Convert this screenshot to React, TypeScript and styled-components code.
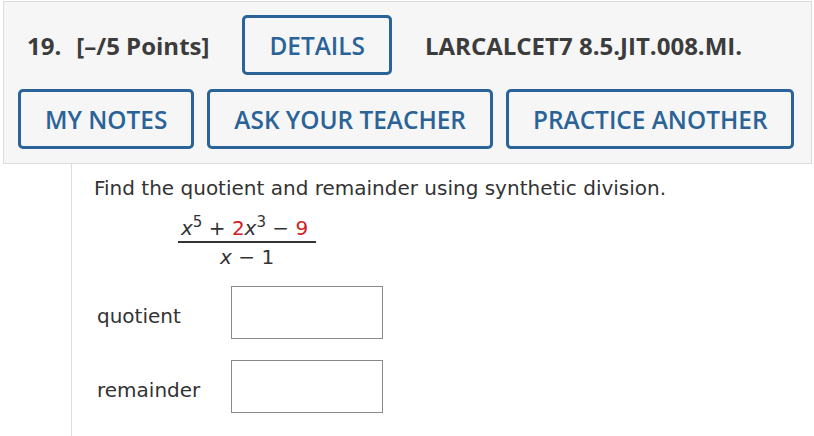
import React from 'react';
import styled, { createGlobalStyle } from 'styled-components';

const GlobalStyle = createGlobalStyle`
  html, body {
    margin: 0;
    padding: 0;
    background: #ffffff;
  }
  body {
    font-family: 'Open Sans', 'Liberation Sans', sans-serif;
    overflow: hidden;
  }
`;

const Panel = styled.div`
  margin: 1px 2px 0 3px;
  border: 1px solid #dcdcdc;
  background: #f6f6f6;
  padding: 13px 0 14px 14px;
  display: flex;
  flex-direction: column;
  gap: 14px;
`;

const Row = styled.div<{ $indent?: number; $gap?: number }>`
  display: flex;
  align-items: center;
  gap: ${(p) => p.$gap || 13}px;
  padding-left: ${(p) => p.$indent || 0}px;
`;

const Title = styled.div`
  display: flex;
  gap: 15px;
`;

const Heading = styled.span`
  font-size: 24px;
  font-weight: 700;
  color: #3c3c3c;
`;

const OutlineButton = styled.button`
  height: 60px;
  padding: 0 24px;
  border: 3px solid #2a6397;
  border-radius: 5px;
  background: #f6f6f6;
  color: #2a6397;
  font-family: 'Open Sans', 'Liberation Sans', sans-serif;
  font-size: 24.4px;
  font-weight: 600;
  cursor: pointer;
`;

const Body = styled.div`
  margin-left: 71px;
  border-left: 1px solid #dcdcdc;
  padding: 10px 0 0 22px;
  min-height: 263px;
  font-family: 'DejaVu Sans', Verdana, sans-serif;
  color: #333333;
`;

const Prompt = styled.div`
  font-size: 20px;
  line-height: 28px;
`;

const Fraction = styled.div`
  display: inline-flex;
  flex-direction: column;
  align-items: center;
  margin: 13px 0 0 84px;
  font-size: 20px;
`;

const Numerator = styled.div`
  padding: 0 8px 0 3px;
  border-bottom: 2px solid #333333;
  line-height: 26px;
`;

const Denominator = styled.div`
  line-height: 26px;
  padding-top: 1px;
`;

const Red = styled.span`
  color: #d02020;
`;

const Sup = styled.sup`
  font-size: 15px;
  line-height: 0;
  vertical-align: 8px;
`;

const Var = styled.i`
  font-style: italic;
`;

const Answers = styled.div`
  display: grid;
  grid-template-columns: 134px 152px;
  row-gap: 21px;
  align-items: center;
  margin-top: 16px;
  margin-left: 3px;
`;

const Label = styled.label`
  font-size: 20px;
  padding-top: 6px;
`;

const AnswerBox = styled.input`
  width: 152px;
  height: 53px;
  box-sizing: border-box;
  border: 1px solid #8a8a8a;
  background: #ffffff;
`;

export default function App() {
  return (
    <>
      <GlobalStyle />
      <Panel>
        <Row $indent={9} $gap={33}>
          <Title>
            <Heading>19.</Heading>
            <Heading>[–/5 Points]</Heading>
          </Title>
          <OutlineButton>DETAILS</OutlineButton>
          <Heading>LARCALCET7 8.5.JIT.008.MI.</Heading>
        </Row>
        <Row>
          <OutlineButton>MY NOTES</OutlineButton>
          <OutlineButton>ASK YOUR TEACHER</OutlineButton>
          <OutlineButton>PRACTICE ANOTHER</OutlineButton>
        </Row>
      </Panel>
      <Body>
        <Prompt>Find the quotient and remainder using synthetic division.</Prompt>
        <Fraction>
          <Numerator>
            <Var>x</Var><Sup>5</Sup> + <Red>2</Red><Var>x</Var><Sup>3</Sup> − <Red>9</Red>
          </Numerator>
          <Denominator>
            <Var>x</Var> − 1
          </Denominator>
        </Fraction>
        <Answers>
          <Label>quotient</Label>
          <AnswerBox type="text" />
          <Label>remainder</Label>
          <AnswerBox type="text" />
        </Answers>
      </Body>
    </>
  );
}
